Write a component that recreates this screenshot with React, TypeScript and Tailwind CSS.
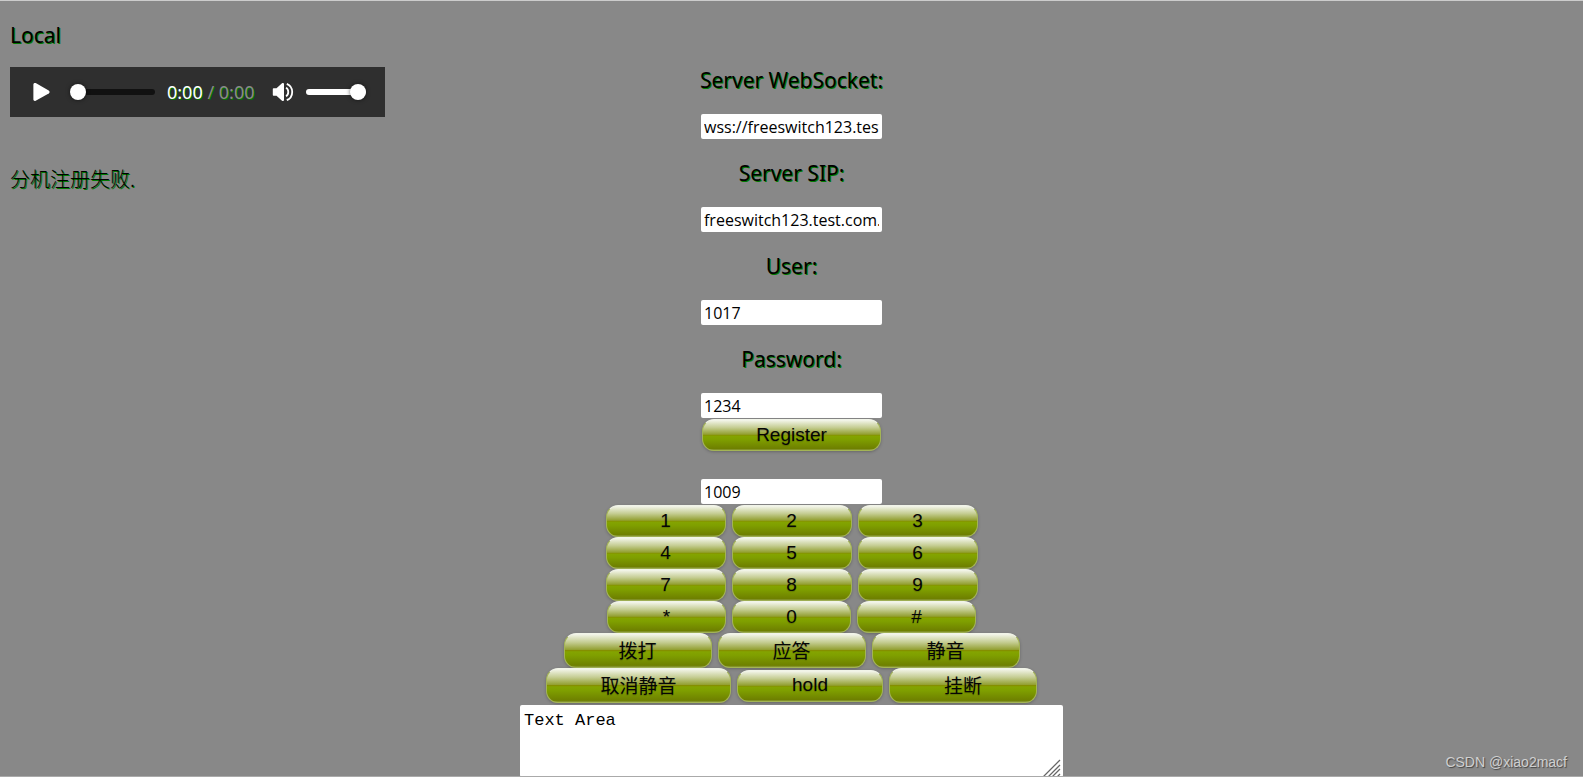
import React from "react";

const shadow = "[text-shadow:1px_1px_0_#007a00]";
const heading = "text-[21px] leading-7 font-normal [text-shadow:1px_1px_0_#007a00]";
const field =
  "block h-[25px] w-[181px] rounded-[2px] border-0 bg-white px-[3px] pt-px font-['Open_Sans',sans-serif] text-base leading-5 text-black outline-none";

const thumb =
  "[&::-webkit-slider-thumb]:h-4 [&::-webkit-slider-thumb]:w-4 [&::-webkit-slider-thumb]:appearance-none [&::-webkit-slider-thumb]:rounded-full [&::-webkit-slider-thumb]:bg-white [&::-webkit-slider-thumb]:shadow-[0_0_4px_rgba(0,0,0,0.6)]";

function Glossy({ children, className }: { children: React.ReactNode; className: string }) {
  return (
    <button
      type="button"
      className={`rounded-xl border border-[#a3b455] border-t-[#f1f4e8] bg-[linear-gradient(to_bottom,#f4f6ec_0%,#c5cd93_25%,#929f30_48%,#858f00_50%,#84a400_54%,#7f9f00_65%,#6e8000_95%,#8c9b3a_100%)] text-center text-[19px] text-[#050505] shadow-[0_1px_3px_rgba(0,0,0,0.25)] [text-shadow:0_1px_1px_rgba(0,0,0,0.2)] ${className}`}
    >
      {children}
    </button>
  );
}

function Field({ id, label, value }: { id: string; label: string; value: string }) {
  return (
    <div className="flex flex-col items-center gap-5">
      <label htmlFor={id} className={heading}>
        {label}
      </label>
      <input id={id} type="text" defaultValue={value} className={field} />
    </div>
  );
}

function AudioPlayer() {
  return (
    <div className="flex h-[50px] w-[375px] items-center bg-[#2f2f2f] pr-[19px] pl-[22px]">
      <button type="button" aria-label="Play" className="w-5">
        <svg viewBox="0 0 20 20" className="h-5 w-5" fill="#fff">
          <path d="M1.4 2.4C1.4 1.2 2.6.6 3.7 1.1l13 7.3c1.2.7 1.2 2.300 0 3l-13 7.300C2.600 19.300 1.400 18.700 1.400 17.500z" />
        </svg>
      </button>
      <input
        type="range"
        aria-label="Position"
        min={0}
        max={100}
        defaultValue={0}
        className={`ml-[18px] h-1.5 w-[85px] appearance-none rounded-full bg-[#111] ${thumb}`}
      />
      <div className={`ml-3 w-[88px] text-lg leading-6 whitespace-nowrap text-[#8a8a8a] ${shadow}`}>
        <span className="text-white">0:00</span> / 0:00
      </div>
      <button type="button" aria-label="Mute" className="ml-[17px]">
        <svg viewBox="0 0 22 20" className="h-5 w-[22px]" fill="none">
          <path
            d="M1.800 6.300H4.500L10 1.300C10.900.600 12 1 12 2.200V17.800C12 19 10.900 19.400 10 18.700L4.500 13.700H1.800C1.200 13.700.800 13.300.800 12.700V7.300C.800 6.700 1.200 6.300 1.800 6.300z"
            fill="#fff"
          />
          <path d="M14 5.800C17 7.300 17 12.700 14 14.200" stroke="#fff" strokeWidth="1.800" />
          <path d="M14.800 1.800C22 4.800 22 15.200 14.800 18.200" stroke="#fff" strokeWidth="1.800" />
        </svg>
      </button>
      <input
        type="range"
        aria-label="Volume"
        min={0}
        max={100}
        defaultValue={100}
        className={`ml-3 h-1.5 w-[60px] appearance-none rounded-full bg-white ${thumb}`}
      />
    </div>
  );
}

export default function App() {
  return (
    <div className="relative h-screen overflow-hidden border-t border-b border-t-[#ccc] border-b-[#aaa] bg-[#888] font-['Noto_Sans','Noto_Sans_CJK_SC',sans-serif] text-black">
      <div className="grid grid-cols-[1fr_auto_1fr]">
        <aside className="w-0 pt-5 pl-2.5 whitespace-nowrap">
          <h3 className={heading}>Local</h3>
          <div className="mt-[18px]">
            <AudioPlayer />
          </div>
          <p className={`mt-12 text-[20px] leading-7 font-light font-['Noto_Sans_CJK_SC',sans-serif] ${shadow}`}>
            分机注册失败.
          </p>
        </aside>

        <main className="flex flex-col items-center pt-[65px]">
          <div className="flex flex-col gap-5">
            <Field id="ws" label="Server WebSocket:" value="wss://freeswitch123.test.com:7443" />
            <Field id="sip" label="Server SIP:" value="freeswitch123.test.com.cn" />
            <Field id="user" label="User:" value="1017" />
            <Field id="password" label="Password:" value="1234" />
          </div>
          <div className="mt-px font-['Liberation_Sans','Noto_Sans_CJK_SC',sans-serif]">
            <Glossy className="block h-8 w-[179px]">Register</Glossy>
          </div>
          <input aria-label="Number" type="text" defaultValue="1009" className={`mt-7 ${field}`} />
          <div className="mt-px flex flex-col items-center font-['Liberation_Sans','Noto_Sans_CJK_SC',sans-serif]">
            {["123", "456", "789", "*0#"].map((row) => (
              <div key={row} className="flex gap-1.5">
                {row.split("").map((key) => (
                  <Glossy key={key} className={row === "*0#" ? "h-8 w-[119px]" : "h-8 w-[120px]"}>
                    {key}
                  </Glossy>
                ))}
              </div>
            ))}
            <div className="flex gap-1.5">
              <Glossy className="h-[35px] w-[148px] pt-1">拨打</Glossy>
              <Glossy className="h-[35px] w-[148px] pt-1">应答</Glossy>
              <Glossy className="h-[35px] w-[148px] pt-1">静音</Glossy>
            </div>
            <div className="flex items-center gap-1.5">
              <Glossy className="h-[35px] w-[185px] pt-1">取消静音</Glossy>
              <Glossy className="h-8 w-[146px]">hold</Glossy>
              <Glossy className="h-[35px] w-[148px] pt-1">挂断</Glossy>
            </div>
          </div>
          <div className="relative mt-0.5">
            <textarea
              aria-label="Text Area"
              defaultValue="Text Area"
              className="block h-[72px] w-[543px] resize-none rounded-[2px] bg-white px-1 pt-1 font-['Liberation_Mono',monospace] text-[17px] leading-6 outline-none"
            />
            <svg viewBox="0 0 18 18" className="absolute right-0.5 bottom-0 h-[18px] w-[18px]" stroke="#666" strokeWidth="1.300">
              <path d="M0 18 17 1M5 18 17 6M9 18 17 10M14 18 17 15" />
            </svg>
          </div>
        </main>
      </div>
      <p className="absolute right-4 bottom-1 font-['Liberation_Sans',sans-serif] text-sm text-[#d0d0d0] [text-shadow:1px_1px_1px_#444]">
        CSDN @xiao2macf
      </p>
    </div>
  );
}
